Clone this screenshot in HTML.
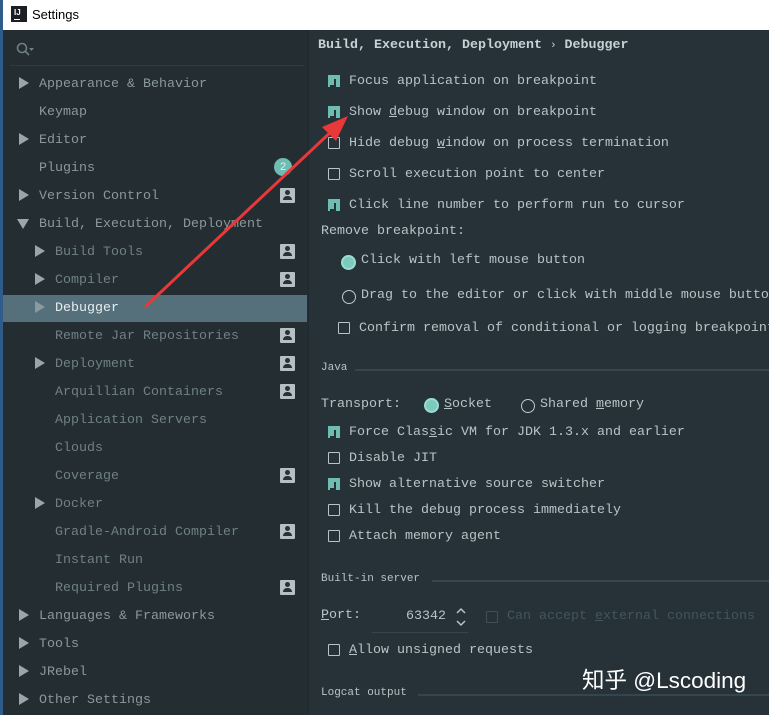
<!DOCTYPE html>
<html><head><meta charset="utf-8"><style>
*{margin:0;padding:0;box-sizing:border-box}
body{width:769px;height:715px;overflow:hidden;background:#263238;position:relative;font-family:"Liberation Mono",monospace;font-size:13.33px}
.t{position:absolute;line-height:16px;white-space:nowrap;margin-top:2px}
.l1{color:#8a999e}.l2{color:#6f8087}
.r{color:#b8c3c7}
.ar{position:absolute;width:0;height:0;border-top:6px solid transparent;border-bottom:6px solid transparent;border-left:10px solid #9aa6aa}
.pi{position:absolute;width:15px;height:15px;background:#b4c0c4;border-radius:1px}
.pi:before{content:"";position:absolute;left:5px;top:2px;width:5px;height:5px;border-radius:50%;background:#263238}
.pi:after{content:"";position:absolute;left:3px;top:8px;width:9px;height:4px;border-radius:4px 4px 0 0;background:#263238}
.cb{position:absolute;width:12px;height:12px;border:1px solid #b8c3c7;border-radius:1px}
.ck{position:absolute;width:12px;height:12px;background:#6fbcb2}
.ck:after{content:"";position:absolute;left:2px;top:4px;width:4px;height:6px;border-right:2px solid #263238;border-bottom:2px solid #263238}
.rd{position:absolute;width:14px;height:14px;border:1px solid #c0c8cc;border-radius:50%}
.rs{position:absolute;width:15px;height:15px;border-radius:50%;background:#7cc9bd;border:2px solid #9adcd0}
.sec{position:absolute;font-size:11px;color:#b8c3c7;margin-top:2px}
.ln{position:absolute;height:2px;background:#34454d}
u{text-decoration:underline}
</style></head><body>
<div style="position:absolute;left:0;top:0;width:769px;height:30px;background:#fff"></div>
<div style="position:absolute;left:0;top:0;width:3px;height:715px;background:#2f5c8a"></div>
<div style="position:absolute;left:11px;top:6px;width:16px;height:16px;background:#1b1f24;color:#fff;font:bold 8px 'Liberation Sans',sans-serif;padding:2px 0 0 3px">IJ<div style="position:absolute;left:3px;bottom:2px;width:6px;height:1px;background:#fff"></div></div>
<div class="t" style="left:32px;top:5px;font:13px 'Liberation Sans',sans-serif;color:#000">Settings</div>
<div style="position:absolute;left:3px;top:30px;width:305px;height:685px;background:#242d31"></div>
<div style="position:absolute;left:308px;top:30px;width:1px;height:685px;background:#20292d"></div>
<div style="position:absolute;left:10px;top:65px;width:295px;height:1px;background:#2e3a40"></div>
<svg style="position:absolute;left:16px;top:42px" width="20" height="16"><circle cx="6" cy="6" r="4.5" fill="none" stroke="#6e7f85" stroke-width="1.6"/><line x1="9" y1="9" x2="13" y2="13" stroke="#6e7f85" stroke-width="1.6"/><path d="M13 6h5l-2.5 3z" fill="#6e7f85"/></svg>
<div style="position:absolute;left:3px;top:295px;width:304px;height:27px;background:#55707a"></div>

<div class="ar" style="left:19px;top:77px"></div><div class="t l1" style="left:39px;top:75px">Appearance &amp; Behavior</div>
<div class="t l1" style="left:39px;top:103px">Keymap</div>
<div class="ar" style="left:19px;top:133px"></div><div class="t l1" style="left:39px;top:131px">Editor</div>
<div class="t l1" style="left:39px;top:159px">Plugins</div>
<div style="position:absolute;left:274px;top:158px;width:18px;height:18px;border-radius:50%;background:#6fbcb2;color:#e0f0ee;font:11px 'Liberation Sans';text-align:center;line-height:18px">2</div>
<div class="ar" style="left:19px;top:189px"></div><div class="t l1" style="left:39px;top:187px">Version Control</div><div class="pi" style="left:280px;top:188px"></div>
<div style="position:absolute;left:17px;top:219px;border-left:6px solid transparent;border-right:6px solid transparent;border-top:10px solid #9aa6aa"></div><div class="t l1" style="left:39px;top:215px">Build, Execution, Deployment</div>
<div class="ar" style="left:35px;top:245px"></div><div class="t l2" style="left:55px;top:243px">Build Tools</div><div class="pi" style="left:280px;top:244px"></div>
<div class="ar" style="left:35px;top:273px"></div><div class="t l2" style="left:55px;top:271px">Compiler</div><div class="pi" style="left:280px;top:272px"></div>
<div class="ar" style="left:35px;top:301px;border-left-color:#8a9aa0"></div><div class="t" style="left:55px;top:299px;color:#e6ecee">Debugger</div>
<div class="t l2" style="left:55px;top:327px">Remote Jar Repositories</div><div class="pi" style="left:280px;top:328px"></div>
<div class="ar" style="left:35px;top:357px"></div><div class="t l2" style="left:55px;top:355px">Deployment</div><div class="pi" style="left:280px;top:356px"></div>
<div class="t l2" style="left:55px;top:383px">Arquillian Containers</div><div class="pi" style="left:280px;top:384px"></div>
<div class="t l2" style="left:55px;top:411px">Application Servers</div>
<div class="t l2" style="left:55px;top:439px">Clouds</div>
<div class="t l2" style="left:55px;top:467px">Coverage</div><div class="pi" style="left:280px;top:468px"></div>
<div class="ar" style="left:35px;top:497px"></div><div class="t l2" style="left:55px;top:495px">Docker</div>
<div class="t l2" style="left:55px;top:523px">Gradle-Android Compiler</div><div class="pi" style="left:280px;top:524px"></div>
<div class="t l2" style="left:55px;top:551px">Instant Run</div>
<div class="t l2" style="left:55px;top:579px">Required Plugins</div><div class="pi" style="left:280px;top:580px"></div>
<div class="ar" style="left:19px;top:609px"></div><div class="t l1" style="left:39px;top:607px">Languages &amp; Frameworks</div>
<div class="ar" style="left:19px;top:637px"></div><div class="t l1" style="left:39px;top:635px">Tools</div>
<div class="ar" style="left:19px;top:665px"></div><div class="t l1" style="left:39px;top:663px">JRebel</div>
<div class="ar" style="left:19px;top:693px"></div><div class="t l1" style="left:39px;top:691px">Other Settings</div>

<div class="t" style="left:318px;top:36px;color:#c8d2d6;font-weight:bold">Build, Execution, Deployment <span style="font-weight:normal;font-size:11px">›</span> Debugger</div>
<div class="ck" style="left:328px;top:75px"></div><div class="t r" style="left:349px;top:72px">Focus application on breakpoint</div>
<div class="ck" style="left:328px;top:106px"></div><div class="t r" style="left:349px;top:103px">Show <u>d</u>ebug window on breakpoint</div>
<div class="cb" style="left:328px;top:137px"></div><div class="t r" style="left:349px;top:134px">Hide debug <u>w</u>indow on process termination</div>
<div class="cb" style="left:328px;top:168px"></div><div class="t r" style="left:349px;top:165px">Scroll execution point to center</div>
<div class="ck" style="left:328px;top:199px"></div><div class="t r" style="left:349px;top:196px">Click line number to perform run to cursor</div>
<div class="t r" style="left:321px;top:222px">Remove breakpoint:</div>
<div class="rs" style="left:341px;top:255px"></div><div class="t r" style="left:361px;top:251px">Click with left mouse button</div>
<div class="rd" style="left:342px;top:290px"></div><div class="t r" style="left:361px;top:286px">Drag to the editor or click with middle mouse button</div>
<div class="cb" style="left:338px;top:322px"></div><div class="t r" style="left:359px;top:319px">Confirm removal of conditional or logging breakpoints</div>
<div class="sec" style="left:321px;top:360px">Java</div><div class="ln" style="left:355px;top:369px;width:414px"></div>
<div class="t r" style="left:321px;top:395px">Transport:</div>
<div class="rs" style="left:424px;top:398px"></div><div class="t r" style="left:444px;top:395px"><u>S</u>ocket</div>
<div class="rd" style="left:521px;top:399px"></div><div class="t r" style="left:540px;top:395px">Shared <u>m</u>emory</div>
<div class="ck" style="left:328px;top:426px"></div><div class="t r" style="left:349px;top:423px">Force Clas<u>s</u>ic VM for JDK 1.3.x and earlier</div>
<div class="cb" style="left:328px;top:452px"></div><div class="t r" style="left:349px;top:449px">Disable JIT</div>
<div class="ck" style="left:328px;top:478px"></div><div class="t r" style="left:349px;top:475px">Show alternative source switcher</div>
<div class="cb" style="left:328px;top:504px"></div><div class="t r" style="left:349px;top:501px">Kill the debug process immediately</div>
<div class="cb" style="left:328px;top:530px"></div><div class="t r" style="left:349px;top:527px">Attach memory agent</div>
<div class="sec" style="left:321px;top:571px">Built-in server</div><div class="ln" style="left:432px;top:580px;width:337px"></div>
<div class="t r" style="left:321px;top:606px"><u>P</u>ort:</div>
<div class="t r" style="left:406px;top:607px">63342</div>
<svg style="position:absolute;left:454px;top:606px" width="14" height="22"><path d="M3 7l4-4 4 4M3 15l4 4 4-4" fill="none" stroke="#b8c3c7" stroke-width="1.5"/></svg>
<div style="position:absolute;left:372px;top:632px;width:96px;height:1px;background:#34454d"></div>
<div class="cb" style="left:486px;top:611px;border-color:#3e4f56"></div><div class="t" style="left:507px;top:607px;color:#44555c">Can accept <u>e</u>xternal connections</div>
<div class="cb" style="left:328px;top:644px"></div><div class="t r" style="left:349px;top:641px"><u>A</u>llow unsigned requests</div>
<div class="sec" style="left:321px;top:685px">Logcat output</div><div class="ln" style="left:418px;top:694px;width:351px"></div>
<div class="t" style="left:582px;top:664px;font:22.5px 'Liberation Sans','Noto Sans CJK SC',sans-serif;line-height:30px;color:#fff">知乎 @Lscoding</div>

<svg style="position:absolute;left:0;top:0" width="769" height="715"><line x1="145" y1="307" x2="335" y2="128" stroke="#e8383a" stroke-width="3"/><path d="M348 116L322 127L336 141Z" fill="#e8383a"/></svg>
</body></html>
